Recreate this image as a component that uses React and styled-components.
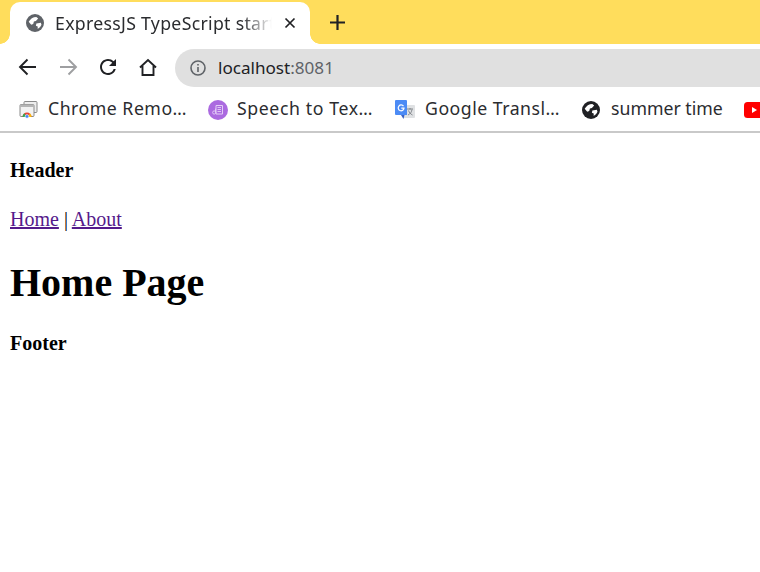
import React from 'react';
import styled, { createGlobalStyle } from 'styled-components';

const GlobalStyle = createGlobalStyle`
  html, body {
    margin: 0;
    padding: 0;
    height: 100%;
    overflow: hidden;
    background: #fff;
  }
`;

const uiFont = `"Noto Sans", "Open Sans", sans-serif`;

const Browser = styled.div`
  display: flex;
  flex-direction: column;
  width: 760px;
  height: 572px;
  overflow: hidden;
`;

const TabStrip = styled.div`
  display: flex;
  align-items: flex-end;
  height: 44px;
  padding-left: 10px;
  background: #ffdd5c;
  flex: none;
`;

const Tab = styled.div`
  position: relative;
  display: flex;
  align-items: center;
  width: 300px;
  height: 42px;
  padding: 0 14px 0 16px;
  box-sizing: border-box;
  background: #fff;
  border-radius: 10px 10px 0 0;

  &::before,
  &::after {
    content: '';
    position: absolute;
    bottom: 0;
    width: 10px;
    height: 10px;
  }
  &::before {
    left: -10px;
    background: radial-gradient(circle at 0 0, #ffdd5c 9.5px, #fff 10px);
  }
  &::after {
    right: -10px;
    background: radial-gradient(circle at 100% 0, #ffdd5c 9.5px, #fff 10px);
  }
`;

const TabTitle = styled.div`
  flex: 1;
  margin-left: 11px;
  overflow: hidden;
  white-space: nowrap;
  font: 17.7px ${uiFont};
  letter-spacing: 0.3px;
  color: #2b2c2f;
  -webkit-mask-image: linear-gradient(to right, #000 187px, transparent 217px);
  mask-image: linear-gradient(to right, #000 187px, transparent 217px);
`;

const NewTab = styled.div`
  display: flex;
  margin-left: 20px;
  align-self: center;
`;

const Toolbar = styled.div`
  display: flex;
  align-items: center;
  height: 44px;
  padding: 4px 0 0 17px;
  box-sizing: border-box;
  background: #fff;
  flex: none;
`;

const NavButton = styled.div`
  display: flex;
  width: 22px;
  height: 22px;
  margin-top: -2px;
  margin-right: ${(p) => p.$gap || 18}px;
  color: ${(p) => (p.$disabled ? '#9e9fa1' : '#202124')};
`;

const Omnibox = styled.div`
  display: flex;
  align-items: center;
  flex: 1;
  height: 38px;
  margin-right: -30px;
  padding-left: 14px;
  background: #e0e0e0;
  border-radius: 19px;
  font: 17.1px ${uiFont};
  color: #202124;
`;

const Host = styled.span`
  margin-left: 11px;
  margin-top: -1px;
`;

const Port = styled.span`
  color: #5f6368;
`;

const BookmarkBar = styled.div`
  display: flex;
  align-items: center;
  gap: 21px;
  height: 43px;
  padding-left: 19px;
  background: #fff;
  border-bottom: 2px solid #c9c9c9;
  flex: none;
  overflow: hidden;
`;

const Bookmark = styled.div`
  display: flex;
  align-items: center;
  gap: ${(p) => p.$gap || 10}px;
  flex: none;
`;

const BookmarkLabel = styled.span`
  width: ${(p) => p.$width}px;
  margin-top: -4px;
  white-space: nowrap;
  font: 17.7px ${uiFont};
  letter-spacing: ${(p) => p.$spacing || 0}px;
  color: #2b2c2f;
`;

const Page = styled.main`
  padding: 0 10px;
  font: 20px "Liberation Serif", serif;
  color: #000;
`;

const SmallHeading = styled.h4`
  margin: 25.6px 0 26.6px;
  font-size: 20px;
`;

const Nav = styled.nav``;

const NavLink = styled.a`
  color: #551a8b;
  text-decoration: underline;
`;

const Title = styled.h1`
  margin: 27.8px 0 25px;
  font-size: 40px;
`;

// default favicon: dark disc with two white land patches
const Globe = ({ color, size = 18 }) => (
  <svg width={size} height={size} viewBox="0 0 20 20" style={{ flex: 'none' }}>
    <circle cx="10" cy="10" r="10" fill={color} />
    <path d="M3 8.5C4.5 5.5 8 3.2 11.5 3.2L13.5 5l-2.5 2.7-2.2.5L8 11l-2.2 1z" fill="#fff" />
    <path d="M11.5 10.5l5-.7.7 2.2c-.8 1.9-2.4 3.6-4.2 4.6V14l-2-1z" fill="#fff" />
  </svg>
);

const CloseIcon = () => (
  <svg width="12" height="12" viewBox="0 0 12 12" style={{ flex: 'none' }}>
    <path d="M1.5 1.5l9 9M10.5 1.5l-9 9" stroke="#202124" strokeWidth="1.7" />
  </svg>
);

const PlusIcon = () => (
  <svg width="15" height="15" viewBox="0 0 15 15">
    <path d="M7.5 0v15M0 7.5h15" stroke="#202124" strokeWidth="2.2" />
  </svg>
);

const ArrowIcon = ({ flip }) => (
  <svg width="22" height="22" viewBox="0 0 22 22" style={flip ? { transform: 'scaleX(-1)' } : undefined}>
    <path d="M19 11H3.5M10.5 3.5L3 11l7.5 7.5" fill="none" stroke="currentColor" strokeWidth="1.9" />
  </svg>
);

const ReloadIcon = () => (
  <svg width="24" height="24" viewBox="0 0 24 24" style={{ margin: '-1px' }}>
    <path
      fill="currentColor"
      d="M17.65 6.35A7.958 7.958 0 0 0 12 4c-4.42 0-7.99 3.58-7.99 8s3.57 8 7.99 8c3.73 0 6.84-2.55 7.73-6h-2.08A5.99 5.99 0 0 1 12 18c-3.31 0-6-2.69-6-6s2.69-6 6-6c1.66 0 3.14.69 4.22 1.78L13 11h7V4l-2.35 2.35z"
    />
  </svg>
);

const HomeIcon = () => (
  <svg width="22" height="22" viewBox="0 0 22 22">
    <path d="M3 11.5L11 4l8 7.5M5.5 10v9h11v-9" fill="none" stroke="currentColor" strokeWidth="1.9" />
  </svg>
);

const InfoIcon = () => (
  <svg width="18" height="18" viewBox="0 0 18 18" style={{ flex: 'none' }}>
    <circle cx="9" cy="9" r="7" fill="none" stroke="#5f6368" strokeWidth="1.6" />
    <path d="M9 8v5M9 5v1.6" stroke="#5f6368" strokeWidth="1.6" />
  </svg>
);

const RemoteIcon = () => (
  <svg width="19" height="19" viewBox="0 0 19 19" style={{ flex: 'none' }}>
    <rect x="5" y="1.5" width="13" height="11" rx="1" fill="#eee" stroke="#8a8a8a" />
    <rect x="1" y="4.5" width="14" height="12" rx="1" fill="#f2f2f2" stroke="#8a8a8a" />
    <rect x="1" y="4.5" width="14" height="2.5" fill="#b5b5b5" />
    <path d="M3.5 17a4.5 4.5 0 0 1 9 0z" fill="#ea4335" />
    <path d="M3.5 17a4.5 4.5 0 0 1 2-3.7l2 3.7z" fill="#34a853" />
    <path d="M12.5 17a4.5 4.5 0 0 0-1.5-3.4L8.5 17z" fill="#fbbc05" />
    <circle cx="8" cy="16.4" r="1.8" fill="#4285f4" stroke="#fff" strokeWidth=".6" />
  </svg>
);

const SpeechIcon = () => (
  <svg width="20" height="20" viewBox="0 0 20 20" style={{ flex: 'none' }}>
    <circle cx="10" cy="10" r="10" fill="#ab6ae0" />
    <path d="M8 5.5h6.5v8.5H8z" fill="none" stroke="#e3cdf6" strokeWidth="1" />
    <path d="M9.5 7.5h3.5M9.5 9.5h3.5M9.5 11.5h3.5" stroke="#e3cdf6" strokeWidth=".9" />
    <circle cx="6.2" cy="12.5" r="1.6" fill="none" stroke="#e3cdf6" strokeWidth=".9" />
    <path d="M7.5 12.5V8.5" stroke="#e3cdf6" strokeWidth=".9" />
  </svg>
);

const TranslateIcon = () => (
  <svg width="20" height="20" viewBox="0 0 20 20" style={{ flex: 'none' }}>
    <rect x="8" y="5" width="12" height="13" rx="1" fill="#dfe1e3" />
    <path d="M12 9h6M15 8v1.5M13 15c2.5-1.2 3.6-3 4-5.5M13.5 10.5c.8 2 2 3.5 4 4.5" fill="none" stroke="#7b7f85" strokeWidth=".9" />
    <path d="M1 0h10a1 1 0 0 1 1 1v14H1a1 1 0 0 1-1-1V1a1 1 0 0 1 1-1z" fill="#4c8bf5" />
    <path d="M9.5 15H6l2.5 4z" fill="#3a62c4" />
    <path d="M8.5 6.2A2.9 2.9 0 1 0 9 8.2H6.3" fill="none" stroke="#fff" strokeWidth="1.2" />
  </svg>
);

const YouTubeIcon = () => (
  <svg width="20" height="16" viewBox="0 0 20 16" style={{ flex: 'none' }}>
    <rect width="20" height="16" rx="3.5" fill="#ff0000" />
    <path d="M8 5l5 3-5 3z" fill="#fff" />
  </svg>
);

function App() {
  return (
    <Browser>
      <GlobalStyle />
      <TabStrip>
        <Tab>
          <Globe color="#5f6368" />
          <TabTitle>ExpressJS TypeScript starter</TabTitle>
          <CloseIcon />
        </Tab>
        <NewTab>
          <PlusIcon />
        </NewTab>
      </TabStrip>
      <Toolbar>
        <NavButton>
          <ArrowIcon />
        </NavButton>
        <NavButton $disabled>
          <ArrowIcon flip />
        </NavButton>
        <NavButton>
          <ReloadIcon />
        </NavButton>
        <NavButton $gap={16}>
          <HomeIcon />
        </NavButton>
        <Omnibox>
          <InfoIcon />
          <Host>
            localhost<Port>:8081</Port>
          </Host>
        </Omnibox>
      </Toolbar>
      <BookmarkBar>
        <Bookmark>
          <RemoteIcon />
          <BookmarkLabel $width={139} $spacing={0.5}>Chrome Remo…</BookmarkLabel>
        </Bookmark>
        <Bookmark $gap={9}>
          <SpeechIcon />
          <BookmarkLabel $width={137} $spacing={0.6}>Speech to Tex…</BookmarkLabel>
        </Bookmark>
        <Bookmark>
          <TranslateIcon />
          <BookmarkLabel $width={136} $spacing={0.5}>Google Transl…</BookmarkLabel>
        </Bookmark>
        <Bookmark $gap={11}>
          <Globe color="#202124" />
          <BookmarkLabel $width={112}>summer time</BookmarkLabel>
        </Bookmark>
        <Bookmark>
          <YouTubeIcon />
        </Bookmark>
      </BookmarkBar>
      <Page>
        <SmallHeading>Header</SmallHeading>
        <Nav>
          <NavLink href="#home">Home</NavLink> | <NavLink href="#about">About</NavLink>
        </Nav>
        <Title>Home Page</Title>
        <SmallHeading>Footer</SmallHeading>
      </Page>
    </Browser>
  );
}

export default App;
